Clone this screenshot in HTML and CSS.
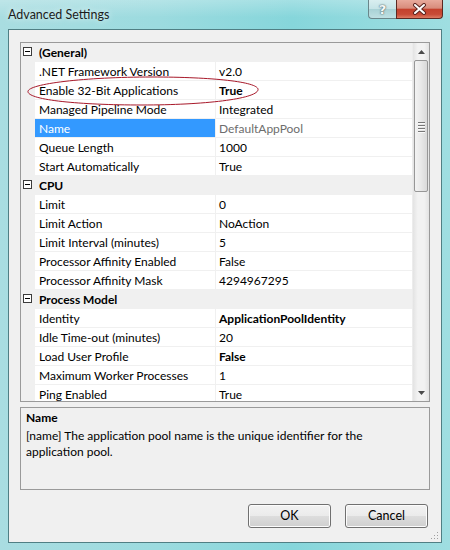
FILE: index.html
```html
<!DOCTYPE html>
<html>
<head>
<meta charset="utf-8">
<link rel="stylesheet" href="styles.css">
</head>
<body>
<div class="window">
  <div class="titlebar">
    <div class="title">Advanced Settings</div>
    <div class="caption">
      <div class="cbtn help"><span class="qmark">?</span></div>
      <div class="cbtn close">
        <svg width="15" height="12" viewBox="0 0 15 12"><path d="M3 2 L12 10 M12 2 L3 10" stroke="#5b2520" stroke-width="4" stroke-linecap="round"/><path d="M3 2 L12 10 M12 2 L3 10" stroke="#ffffff" stroke-width="2" stroke-linecap="round"/></svg>
      </div>
    </div>
  </div>
  <div class="client">
    <div class="grid">
      <div class="rows">
        <div class="row cat"><div class="gutter"><span class="exp"></span></div><div class="catname">(General)</div></div>
        <div class="row"><div class="gutter"></div><div class="name">.NET Framework Version</div><div class="val">v2.0</div></div>
        <div class="row"><div class="gutter"></div><div class="name">Enable 32-Bit Applications</div><div class="val b">True</div></div>
        <div class="row"><div class="gutter"></div><div class="name">Managed Pipeline Mode</div><div class="val">Integrated</div></div>
        <div class="row sel"><div class="gutter"></div><div class="name">Name</div><div class="val ro">DefaultAppPool</div></div>
        <div class="row"><div class="gutter"></div><div class="name">Queue Length</div><div class="val">1000</div></div>
        <div class="row"><div class="gutter"></div><div class="name">Start Automatically</div><div class="val">True</div></div>
        <div class="row cat"><div class="gutter"><span class="exp"></span></div><div class="catname">CPU</div></div>
        <div class="row"><div class="gutter"></div><div class="name">Limit</div><div class="val">0</div></div>
        <div class="row"><div class="gutter"></div><div class="name">Limit Action</div><div class="val">NoAction</div></div>
        <div class="row"><div class="gutter"></div><div class="name">Limit Interval (minutes)</div><div class="val">5</div></div>
        <div class="row"><div class="gutter"></div><div class="name">Processor Affinity Enabled</div><div class="val">False</div></div>
        <div class="row"><div class="gutter"></div><div class="name">Processor Affinity Mask</div><div class="val">4294967295</div></div>
        <div class="row cat"><div class="gutter"><span class="exp"></span></div><div class="catname">Process Model</div></div>
        <div class="row"><div class="gutter"></div><div class="name">Identity</div><div class="val b">ApplicationPoolIdentity</div></div>
        <div class="row"><div class="gutter"></div><div class="name">Idle Time-out (minutes)</div><div class="val">20</div></div>
        <div class="row"><div class="gutter"></div><div class="name">Load User Profile</div><div class="val b">False</div></div>
        <div class="row"><div class="gutter"></div><div class="name">Maximum Worker Processes</div><div class="val">1</div></div>
        <div class="row"><div class="gutter"></div><div class="name">Ping Enabled</div><div class="val">True</div></div>
      </div>
      <div class="sb">
        <div class="sb-btn"><svg width="7" height="4" viewBox="0 0 7 4"><path d="M0 4 L3.5 0 L7 4 Z" fill="#4a4a4a"/></svg></div>
        <div class="thumb"><div class="grip"><i></i><i></i><i></i><i></i></div></div>
        <div class="track"></div>
        <div class="sb-btn"><svg width="7" height="4" viewBox="0 0 7 4"><path d="M0 0 L7 0 L3.5 4 Z" fill="#4a4a4a"/></svg></div>
      </div>
    </div>
    <div class="desc">
      <div class="desc-title">Name</div>
      <div class="desc-text">[name] The application pool name is the unique identifier for the<br>application pool.</div>
    </div>
    <div class="buttons">
      <div class="btn">OK</div>
      <div class="btn">Cancel</div>
    </div>
    <svg class="sizegrip" width="9" height="9" viewBox="0 0 9 9">
      <rect x="7" y="1" width="1" height="1" fill="#a0a0a0"/>
      <rect x="4" y="4" width="1" height="1" fill="#a0a0a0"/><rect x="7" y="4" width="1" height="1" fill="#a0a0a0"/>
      <rect x="1" y="7" width="1" height="1" fill="#a0a0a0"/><rect x="4" y="7" width="1" height="1" fill="#a0a0a0"/><rect x="7" y="7" width="1" height="1" fill="#a0a0a0"/>
    </svg>
  </div>
  <svg class="annot" width="240" height="38" viewBox="0 0 240 38">
    <path d="M4 20 C 2 12, 60 5, 128 5 C 190 5, 236 10, 234 18 C 232 27, 180 33, 118 33 C 55 33, 6 28, 4 20 Z" fill="none" stroke="#a8192a" stroke-width="1"/>
  </svg>
</div>
</body>
</html>
```
FILE: styles.css
```css
html, body {
  margin: 0;
  padding: 0;
}
body {
  width: 450px;
  height: 550px;
  overflow: hidden;
  background: linear-gradient(90deg, #a9dde1 0%, #9cdbdf 35%, #86d6db 65%, #9fdee1 100%);
  font-family: Lato, "Segoe UI", sans-serif;
  font-size: 12px;
  color: #000;
}
.window {
  position: relative;
  height: 550px;
  display: flex;
  flex-direction: column;
}
.titlebar {
  height: 29px;
  flex: none;
  display: flex;
  align-items: flex-start;
  background: linear-gradient(180deg, rgba(255,255,255,0.25), rgba(255,255,255,0) 60%);
}
.title {
  padding-left: 8px;
  line-height: 30px;
  font-size: 12.5px;
  color: #1c1c1c;
  text-shadow: 0 0 6px rgba(255,255,255,0.9);
}
.caption {
  margin-left: auto;
  margin-right: 7px;
  display: flex;
}
.cbtn {
  height: 19px;
  box-sizing: border-box;
  display: flex;
  align-items: center;
  justify-content: center;
}
.help {
  width: 28px;
  border: 1px solid #6a868a;
  border-top: none;
  border-right: none;
  border-radius: 0 0 0 4px;
  background: linear-gradient(180deg, #d9eef0 0%, #c6e4e7 48%, #a9d2d6 52%, #bfe0e3 100%);
}
.qmark {
  font-family: "DejaVu Sans", sans-serif;
  font-weight: bold;
  font-size: 13px;
  color: #f4f8f8;
  text-shadow: 0 0 1px #4d5f62, 0 0 2px #4d5f62;
}
.close {
  width: 47px;
  border: 1px solid #5c2922;
  border-top: none;
  border-radius: 0 0 4px 0;
  background: linear-gradient(180deg, #e8aa9c 0%, #d88c7c 45%, #c4412d 52%, #c84b36 80%, #dd7a62 100%);
}
.client {
  position: relative;
  margin: 0 8px;
  height: 514px;
  box-sizing: border-box;
  border: 1px solid #507f84;
  background: #f0f0f0;
  padding: 12px 11px 0 11px;
  display: flex;
  flex-direction: column;
}
.grid {
  height: 360px;
  flex: none;
  box-sizing: border-box;
  border: 1px solid #9a9a9a;
  background: #fff;
  display: flex;
}
.rows {
  flex: 1;
  overflow: hidden;
}
.row {
  display: flex;
  height: 19px;
  box-sizing: border-box;
  border-bottom: 1px solid #f0f0f0;
  line-height: 20px;
  white-space: nowrap;
  overflow: hidden;
}
.gutter {
  width: 14px;
  flex: none;
  background: #f0f0f0;
  position: relative;
}
.exp {
  position: absolute;
  left: 2px;
  top: 4px;
  width: 9px;
  height: 9px;
  box-sizing: border-box;
  border: 1px solid #3c3c3c;
  background: #fff;
}
.exp::after {
  content: "";
  position: absolute;
  left: 1px;
  top: 3px;
  width: 5px;
  height: 1px;
  background: #000;
}
.row.cat {
  background: #f0f0f0;
}
.catname {
  padding-left: 4px;
  font-weight: bold;
}
.name {
  width: 181px;
  flex: none;
  box-sizing: border-box;
  padding-left: 4px;
  border-right: 1px solid #f0f0f0;
  overflow: hidden;
}
.val {
  flex: 1;
  padding-left: 3px;
  overflow: hidden;
}
.val.b {
  font-weight: bold;
}
.val.ro {
  color: #6d6d6d;
}
.row.sel .name {
  background: #3399ff;
  color: #fff;
}
.sb {
  width: 17px;
  flex: none;
  display: flex;
  flex-direction: column;
  background: linear-gradient(90deg, #e3e3e3, #f2f2f2 30%, #f2f2f2 70%, #e3e3e3);
  border-left: 1px solid #ececec;
  box-sizing: border-box;
}
.sb-btn {
  height: 17px;
  flex: none;
  display: flex;
  align-items: center;
  justify-content: center;
}
.thumb {
  height: 132px;
  flex: none;
  margin: 0 1px;
  box-sizing: border-box;
  border: 1px solid #979797;
  border-radius: 2px;
  background: linear-gradient(90deg, #f3f3f3, #e8e8e8 50%, #d9d9d9);
  display: flex;
  align-items: center;
  justify-content: center;
}
.grip {
  display: flex;
  flex-direction: column;
  gap: 1px;
  margin-top: 2px;
}
.grip i {
  display: block;
  width: 7px;
  height: 1px;
  background: #777;
  border-bottom: 1px solid #fafafa;
}
.track {
  flex: 1;
}
.desc {
  margin-top: 5px;
  height: 83px;
  flex: none;
  box-sizing: border-box;
  border: 1px solid #9a9a9a;
  padding: 2px 5px 1px;
  line-height: 16px;
}
.desc-title {
  font-weight: bold;
  height: 16px;
}
.desc-text {
  margin-top: 2px;
}
.buttons {
  display: flex;
  justify-content: flex-end;
  gap: 14px;
  margin-top: 14px;
  margin-right: 2px;
}
.btn {
  width: 83px;
  height: 24px;
  box-sizing: border-box;
  border: 1px solid #707070;
  border-radius: 3px;
  background: linear-gradient(180deg, #f2f2f2 0%, #ebebeb 49%, #dddddd 51%, #cfcfcf 100%);
  box-shadow: inset 0 0 0 1px #fcfcfc;
  text-align: center;
  line-height: 22px;
  font-size: 12.5px;
}
.sizegrip {
  position: absolute;
  right: 2px;
  bottom: 2px;
}
.annot {
  position: absolute;
  left: 24px;
  top: 72px;
  pointer-events: none;
}
```
